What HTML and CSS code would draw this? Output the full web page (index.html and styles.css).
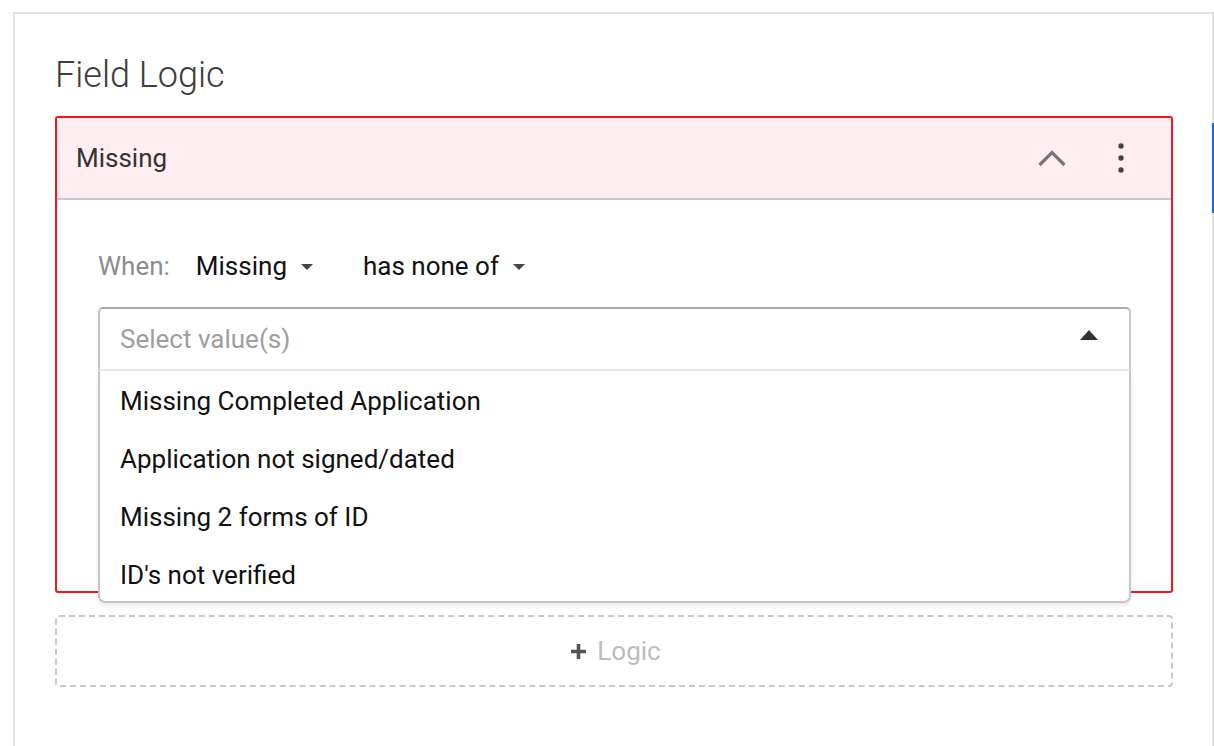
FILE: index.html
```html
<!DOCTYPE html>
<html lang="en">
<head>
<meta charset="utf-8">
<title>Field Logic</title>
<link rel="stylesheet" href="styles.css">
</head>
<body>
<div class="panel">
  <h2 class="title">Field Logic</h2>
  <div class="card">
    <div class="card-head">
      <span class="card-title">Missing</span>
      <div class="head-actions">
        <span class="icon-btn">
          <svg width="28" height="17" viewBox="0 0 28 17"><polyline points="1.5,15 14,2.5 26.5,15" fill="none" stroke="#777" stroke-width="3.2"/></svg>
        </span>
        <span class="icon-btn">
          <svg width="8" height="32" viewBox="0 0 8 32"><circle cx="4" cy="4" r="2.7" fill="#444"/><circle cx="4" cy="16" r="2.7" fill="#444"/><circle cx="4" cy="28" r="2.7" fill="#444"/></svg>
        </span>
      </div>
    </div>
    <div class="card-body">
      <div class="when-row">
        <span class="when-label">When:</span>
        <span class="dd dd-field">Missing<svg class="caret" width="12" height="6" viewBox="0 0 12 6"><polygon points="0,0 12,0 6,6" fill="#444"/></svg></span>
        <span class="dd">has none of<svg class="caret" width="12" height="6" viewBox="0 0 12 6"><polygon points="0,0 12,0 6,6" fill="#444"/></svg></span>
      </div>
      <div class="select">
        <div class="select-input">
          <span class="placeholder">Select value(s)</span>
          <svg class="up" width="18" height="10" viewBox="0 0 18 10"><polygon points="0,10 18,10 9,0" fill="#333"/></svg>
        </div>
        <ul class="menu">
          <li class="menu-item">Missing Completed Application</li>
          <li class="menu-item">Application not signed/dated</li>
          <li class="menu-item">Missing 2 forms of ID</li>
          <li class="menu-item">ID's not verified</li>
        </ul>
      </div>
    </div>
  </div>
  <div class="add-logic">
    <svg class="plus" width="15" height="15" viewBox="0 0 15 15"><path d="M7.5 0v15M0 7.5h15" stroke="#555" stroke-width="3.6"/></svg>
    <span class="add-label">Logic</span>
  </div>
  <div class="scroll-indicator"></div>
</div>
</body>
</html>
```
FILE: styles.css
```css
* { box-sizing: border-box; }
html, body { margin: 0; padding: 0; background: #fff; }
body {
  font-family: Roboto, "Liberation Sans", Arial, sans-serif;
  overflow: hidden;
  padding-top: 12px;
  padding-left: 13px;
  width: 1214px;
  height: 746px;
}
.panel {
  position: relative;
  height: 734px;
  border: 2px solid #e2e2e2;
  border-bottom: none;
  padding: 40px 39px 0 40px;
}
.title {
  margin: 0 0 20px 0;
  font-size: 36px;
  font-weight: 300;
  line-height: 42px;
  color: #3d3d3d;
}
.card {
  border: 2px solid #f5161f;
  border-radius: 3px;
}
.card-head {
  height: 82px;
  background: #ffeef1;
  border-bottom: 2px solid #c9c9c9;
  display: flex;
  align-items: center;
  justify-content: space-between;
  padding: 0 30px 0 19px;
}
.card-title {
  font-size: 26px;
  line-height: 30px;
  color: #333;
}
.head-actions {
  display: flex;
  align-items: center;
  gap: 29px;
}
.icon-btn {
  width: 40px;
  height: 40px;
  display: flex;
  align-items: center;
  justify-content: center;
}
.card-body {
  padding: 51px 40px 220px 41px;
}
.when-row {
  display: flex;
  align-items: center;
  height: 30px;
  font-size: 26px;
  line-height: 30px;
}
.when-label {
  color: #8c8c8c;
  margin-right: 26px;
}
.dd {
  color: #111;
  display: flex;
  align-items: center;
}
.dd-field { margin-right: 50px; }
.caret { margin-left: 14px; margin-top: 2px; }
.select {
  position: relative;
  margin-top: 26px;
  border: 2px solid #c6c6c6;
  border-top-color: #ababab;
  border-bottom-color: #e6e6e6;
  border-radius: 5px 5px 0 0;
}
.select-input {
  height: 60px;
  display: flex;
  align-items: center;
  justify-content: space-between;
  padding: 0 31px 0 20px;
}
.placeholder {
  font-size: 26px;
  line-height: 30px;
  color: #9e9e9e;
}
.up { margin-bottom: 8px; }
.menu {
  position: absolute;
  top: 100%;
  left: -2px;
  right: -2px;
  margin: 2px 0 0 0;
  padding: 1px 0 0 0;
  list-style: none;
  background: #fff;
  border: 2px solid #c6c6c6;
  border-top: none;
  border-radius: 0 0 7px 7px;
  box-shadow: 0 3px 4px rgba(0, 0, 0, 0.08);
  z-index: 2;
}
.menu-item {
  height: 58px;
  display: flex;
  align-items: center;
  padding-left: 20px;
  font-size: 26px;
  color: #111;
}
.menu-item:last-child {
  height: 55px;
  padding-bottom: 0;
  align-items: flex-start;
  padding-top: 14px;
}
.add-logic {
  margin-top: 22px;
  height: 72px;
  border: 2px dashed #c8c8c8;
  border-radius: 4px;
  display: flex;
  align-items: center;
  justify-content: center;
  gap: 11px;
  padding-left: 4px;
}
.add-label {
  font-size: 26px;
  line-height: 30px;
  color: #bdbdbd;
}
.scroll-indicator {
  position: absolute;
  right: -2px;
  top: 109px;
  width: 2px;
  height: 90px;
  background: #0c6fe6;
}
```
